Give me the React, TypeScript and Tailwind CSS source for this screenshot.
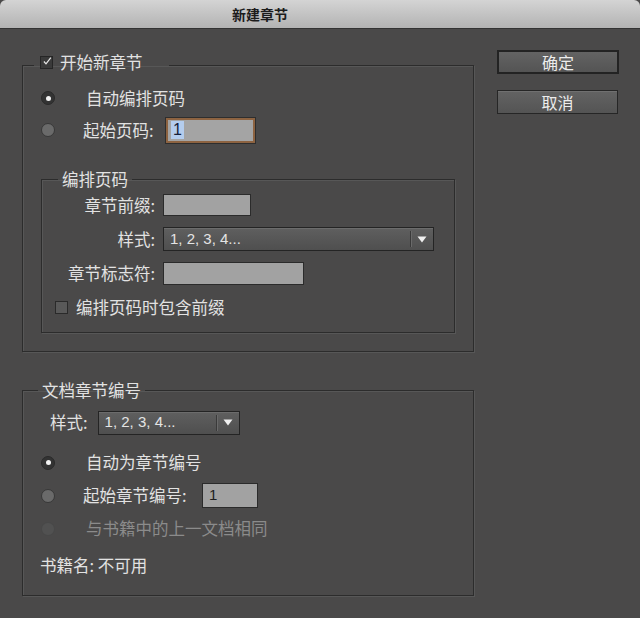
import type { ReactNode } from 'react'

const font = '"Noto Sans CJK SC", "Liberation Sans", sans-serif'
const latin = '"Liberation Sans", "Noto Sans CJK SC", sans-serif'

function Radio({ checked = false, disabled = false }: { checked?: boolean; disabled?: boolean }) {
  if (checked) {
    return (
      <span className="flex h-[14px] w-[14px] shrink-0 items-center justify-center rounded-full border border-[#2a2a2a] bg-[#333]">
        <span className="h-[5px] w-[5px] rounded-full bg-[#f2f2f2]" />
      </span>
    )
  }
  return (
    <span
      className={
        disabled
          ? 'h-[14px] w-[14px] shrink-0 rounded-full border border-[#484848] bg-[#515151]'
          : 'h-[14px] w-[14px] shrink-0 rounded-full border border-[#383838] bg-[#6a6a6a]'
      }
    />
  )
}

function Checkbox({ checked = false }: { checked?: boolean }) {
  return (
    <span
      className={
        checked
          ? 'flex h-[13px] w-[13px] shrink-0 items-center justify-center border border-[#262626] bg-[#3a3a3a]'
          : 'h-[13px] w-[13px] shrink-0 border border-[#2a2a2a] bg-[#595959]'
      }
    >
      {checked && (
        <svg width="13" height="13" viewBox="0 0 13 13" className="-mt-[2px] ml-[1px]">
          <path d="M2.5 6.5 L5.2 9.5 L11.5 1.5" fill="none" stroke="#e6e6e6" strokeWidth="1.6" />
        </svg>
      )}
    </span>
  )
}

function Field({ width, height = 22, children }: { width: number; height?: number; children?: ReactNode }) {
  return (
    <span
      className="flex items-center border border-[#2b2b2b] bg-[#a2a2a2] pl-[6px] text-[15px] text-[#1e1e1e]"
      style={{ width, height, fontFamily: latin }}
    >
      {children}
    </span>
  )
}

function Select({ width }: { width: number }) {
  return (
    <span
      className="flex h-[24px] items-center border border-[#242424] bg-gradient-to-b from-[#5f5f5f] to-[#4f4f4f] text-[15px] text-[#e4e4e4] shadow-[inset_0_1px_0_#6c6c6c]"
      style={{ width, fontFamily: latin }}
    >
      <span className="flex-1 pl-[6px]">1, 2, 3, 4...</span>
      <span className="h-[16px] w-px bg-[#3a3a3a] shadow-[1px_0_0_#6a6a6a]" />
      <span className="flex w-[22px] items-center justify-center">
        <svg width="10" height="7" viewBox="0 0 10 7">
          <path d="M0.5 0.5 H9.5 L5 6.5 Z" fill="#f0f0f0" />
        </svg>
      </span>
    </span>
  )
}

function Button({ label, primary = false }: { label: string; primary?: boolean }) {
  return (
    <button
      type="button"
      className={
        primary
          ? 'flex h-[24px] w-[122px] items-center justify-center border-2 border-[#232323] bg-gradient-to-b from-[#636363] to-[#545454] text-[16px] text-[#ececec]'
          : 'flex h-[24px] w-[121px] items-center justify-center border border-[#262626] bg-gradient-to-b from-[#636363] to-[#545454] text-[16px] text-[#ececec] shadow-[inset_0_1px_0_#707070]'
      }
    >
      {label}
    </button>
  )
}

const groupBox = 'border border-[#2c2c2c] shadow-[inset_1px_1px_0_#575757,1px_1px_0_#575757]'

export default function App() {
  return (
    <div className="h-[618px] w-[640px] overflow-hidden bg-[#4a4949] text-[16.5px] text-[#e2e2e2]" style={{ fontFamily: font }}>
      <div className="flex h-[29px] items-center rounded-t-[6px] border-b border-[#333] bg-gradient-to-b from-[#d4d4d4] to-[#b3b3b3] pl-[232px]">
        <span className="text-[14px] font-bold text-[#1c1c1c]">新建章节</span>
      </div>

      <div className="flex gap-[23px]">
        <div className="w-[474px] pl-[22px] pt-[23px]">
          {/* 开始新章节 */}
          <fieldset className={`${groupBox} w-[452px] pb-[18px] pl-[18px] pr-[18px]`}>
            <legend className="-ml-[7px] flex items-center gap-[7px] pb-[6px] pl-[6px] pr-[26px] leading-[20px]">
              <Checkbox checked />
              <span>开始新章节</span>
            </legend>
            <div className="pt-[4px]">
              <div className="flex h-[32px] items-center gap-[31px]">
                <Radio checked />
                <span>自动编排页码</span>
              </div>
              <div className="flex h-[32px] items-center">
                <Radio />
                <span className="ml-[28px] w-[83px]">起始页码:</span>
                <span
                  className="flex h-[25px] w-[89px] items-center border-2 border-[#8d6341] bg-[#a4a4a4] pl-[3px] text-[16px] shadow-[0_0_0_1px_#2e2e2e]"
                  style={{ fontFamily: latin }}
                >
                  <span className="bg-[#b4cdee] px-[2px] leading-[18px] text-[#15203a]">1</span>
                </span>
              </div>
            </div>

            {/* 编排页码 */}
            <fieldset className={`${groupBox} mt-[24px] pb-[8px] pl-[13px]`}>
              <legend className="ml-[3px] px-[4px] leading-[18px]">编排页码</legend>
              <div className="flex h-[34px] items-center">
                <span className="w-[100px] text-right">章节前缀:</span>
                <span className="ml-[8px]">
                  <Field width={88} />
                </span>
              </div>
              <div className="flex h-[34px] items-center">
                <span className="w-[100px] text-right">样式:</span>
                <span className="ml-[8px]">
                  <Select width={271} />
                </span>
              </div>
              <div className="flex h-[34px] items-center">
                <span className="w-[100px] text-right">章节标志符:</span>
                <span className="ml-[8px]">
                  <Field width={141} height={23} />
                </span>
              </div>
              <div className="flex h-[34px] items-center gap-[8px]">
                <Checkbox />
                <span>编排页码时包含前缀</span>
              </div>
            </fieldset>
          </fieldset>

          {/* 文档章节编号 */}
          <fieldset className={`${groupBox} mt-[28px] w-[452px] pb-[20px] pl-[17px]`}>
            <legend className="-ml-[2px] px-[4px] leading-[20px]">文档章节编号</legend>
            <div className="ml-[10px] mt-[11px] flex h-[23px] items-center gap-[10px]">
              <span>样式:</span>
              <Select width={142} />
            </div>
            <div className="ml-[1px] mt-[12px]">
              <div className="flex h-[33px] items-center gap-[31px]">
                <Radio checked />
                <span>自动为章节编号</span>
              </div>
              <div className="flex h-[33px] items-center">
                <Radio />
                <span className="ml-[28px] w-[119px]">起始章节编号:</span>
                <Field width={56} height={25}>
                  1
                </Field>
              </div>
              <div className="flex h-[33px] items-center gap-[31px]">
                <Radio disabled />
                <span className="text-[#8b8b8b]">与书籍中的上一文档相同</span>
              </div>
            </div>
            <div className="mt-[10px] flex h-[20px] items-center">书籍名: 不可用</div>
          </fieldset>
        </div>

        <div className="flex flex-col gap-[16px] pt-[21px]">
          <Button label="确定" primary />
          <Button label="取消" />
        </div>
      </div>
    </div>
  )
}
